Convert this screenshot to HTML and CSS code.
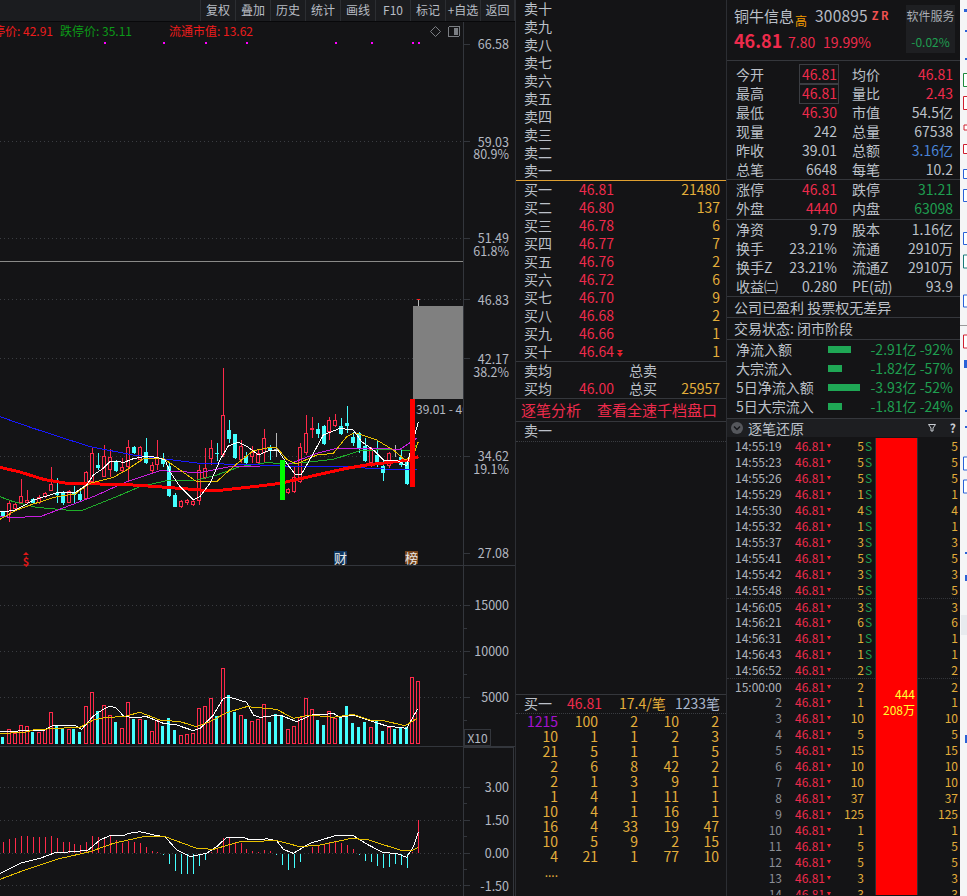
FILE: index.html
```html
<!DOCTYPE html>
<html lang="zh-CN">
<head>
<meta charset="utf-8">
<title>铜牛信息 300895</title>
<link rel="stylesheet" href="styles.css">
</head>
<body>
<div class="app">
  <section class="chart-col">
    <nav class="toolbar">
      <span class="tool">复权</span><span class="tool">叠加</span><span class="tool">历史</span><span class="tool">统计</span><span class="tool">画线</span><span class="tool">F10</span><span class="tool">标记</span><span class="tool">+自选</span><span class="tool">返回</span>
    </nav>
    <svg class="chart" id="chart" width="515" height="874" viewBox="0 22 515 874" xmlns="http://www.w3.org/2000/svg">
      <g class="grid">
        <line x1="0" x2="463" y1="141.5" y2="141.5"/><line x1="0" x2="463" y1="238.5" y2="238.5"/>
        <line x1="0" x2="463" y1="299.5" y2="299.5"/><line x1="0" x2="463" y1="358.5" y2="358.5"/>
        <line x1="0" x2="463" y1="456.5" y2="456.5"/><line x1="0" x2="463" y1="605.5" y2="605.5"/>
        <line x1="0" x2="463" y1="651.5" y2="651.5"/><line x1="0" x2="463" y1="697.5" y2="697.5"/>
        <line x1="0" x2="463" y1="787.5" y2="787.5"/><line x1="0" x2="463" y1="820.5" y2="820.5"/>
        <line x1="0" x2="463" y1="853.5" y2="853.5"/><line x1="0" x2="463" y1="885.5" y2="885.5"/>
      </g>
      <line class="fib" x1="0" x2="463" y1="261.5" y2="261.5"/>
      <g class="ticks">
        <path d="M464 44.5h6M464 141.5h6M464 238.5h6M464 299.5h6M464 358.5h6M464 456.5h6M464 553.5h6M464 605.5h6M464 628.5h3M464 651.5h6M464 674.5h3M464 697.5h6M464 720.5h3M464 787.5h6M464 803.5h3M464 820.5h6M464 836.5h3M464 853.5h6M464 869.5h3M464 885.5h6"/>
      </g>
      <g id="marks"></g>
      <rect class="shade" x="413" y="306" width="50" height="93"/>
      <text class="ma-note" x="416" y="408">39.01 - 46.81</text>
      <rect class="axis-cover" x="464" y="395" width="51" height="26"/>
      <rect class="axis-cover" x="464" y="22" width="51" height="14"/>
      <path class="frame" d="M463.5 22V896M0 565.5H515M0 746.5H515M513.5 747V896M464 747.5H513.5"/>
      <g class="axis">
        <text x="509" y="43">66.58</text><text x="509" y="141">59.03</text><text x="509" y="153.500">80.9%</text>
        <text x="509" y="237.500">51.49</text><text x="509" y="250">61.8%</text><text x="509" y="299">46.83</text>
        <text x="509" y="358.500">42.17</text><text x="509" y="371">38.2%</text><text x="509" y="455.500">34.62</text>
        <text x="509" y="468">19.1%</text><text x="509" y="552.500">27.08</text><text x="509" y="604.500">15000</text>
        <text x="509" y="650">10000</text><text x="509" y="696">5000</text><text x="509" y="786.500">3.00</text>
        <text x="509" y="819.500">1.50</text><text x="509" y="852.500">0.00</text><text x="509" y="885">-1.50</text>
      </g>
      <rect class="x10-box" x="464.500" y="729.500" width="26" height="16"/>
      <text class="x10" x="477.500" y="737.500">X10</text>
      <g class="top-info">
        <text class="red" x="-19" y="30">涨停价: 42.91</text>
        <text class="green" x="60" y="30">跌停价: 35.11</text>
        <text class="red" x="169" y="30">流通市值: 13.62</text>
      </g>
      <path class="diamond" d="M435.500 26.500l5 5-5 5-5-5z"/>
      <rect class="panel-ico" x="448.500" y="26.500" width="11" height="10" rx="1.500"/>
      <rect class="panel-fill" x="454" y="28" width="4" height="7"/>
      <path class="flag-up" d="M26 552l3 3h-6z"/>
      <text class="flag-s" x="26" y="561">$</text>
      <rect class="flag-cai" x="334" y="551" width="13" height="13"/>
      <text class="flag-txt" x="340.500" y="557.500">财</text>
      <rect class="flag-bang" x="405" y="551" width="13" height="13"/>
      <text class="flag-txt" x="411.500" y="557.500">榜</text>
    </svg>
  </section>

  <section class="book-col">
    <div class="ladder">
      <div class="lvl"><span>卖十</span></div><div class="lvl"><span>卖九</span></div><div class="lvl"><span>卖八</span></div><div class="lvl"><span>卖七</span></div><div class="lvl"><span>卖六</span></div><div class="lvl"><span>卖五</span></div><div class="lvl"><span>卖四</span></div><div class="lvl"><span>卖三</span></div><div class="lvl"><span>卖二</span></div><div class="lvl"><span>卖一</span></div>
    </div>
    <div class="ladder buy">
      <div class="lvl"><span>买一</span><span class="red">46.81</span><span class="yel">21480</span></div>
      <div class="lvl"><span>买二</span><span class="red">46.80</span><span class="yel">137</span></div>
      <div class="lvl"><span>买三</span><span class="red">46.78</span><span class="yel">6</span></div>
      <div class="lvl"><span>买四</span><span class="red">46.77</span><span class="yel">7</span></div>
      <div class="lvl"><span>买五</span><span class="red">46.76</span><span class="yel">2</span></div>
      <div class="lvl"><span>买六</span><span class="red">46.72</span><span class="yel">6</span></div>
      <div class="lvl"><span>买七</span><span class="red">46.70</span><span class="yel">9</span></div>
      <div class="lvl"><span>买八</span><span class="red">46.68</span><span class="yel">2</span></div>
      <div class="lvl"><span>买九</span><span class="red">46.66</span><span class="yel">1</span></div>
      <div class="lvl"><span>买十</span><span class="red">46.64<svg class="dbl" width="6" height="7" viewBox="0 0 6 7"><path d="M0 0h6L3 3zM0 3h6L3 7z"/></svg></span><span class="yel">1</span></div>
    </div>
    <div class="avg">
      <div class="avg-row"><span>卖均</span><span></span><span>总卖</span><span></span></div>
      <div class="avg-row"><span>买均</span><span class="red">46.00</span><span>总买</span><span class="yel">25957</span></div>
    </div>
    <div class="links"><span>逐笔分析</span><span>查看全速千档盘口</span></div>
    <div class="queue-head"><span>卖一</span></div>
    <div class="queue-empty"></div>
    <div class="queue-stat"><span>买一</span><span class="red">46.81</span><span class="yel">17.4/笔</span><span class="blu">1233笔</span></div>
    <div class="queue">
      <span class="pur">1215</span><span>100</span><span>2</span><span>10</span><span>2</span>
      <span>10</span><span>1</span><span>1</span><span>2</span><span>3</span>
      <span>21</span><span>5</span><span>1</span><span>1</span><span>5</span>
      <span>2</span><span>6</span><span>8</span><span>42</span><span>2</span>
      <span>2</span><span>1</span><span>3</span><span>9</span><span>1</span>
      <span>1</span><span>4</span><span>1</span><span>11</span><span>1</span>
      <span>10</span><span>4</span><span>1</span><span>16</span><span>1</span>
      <span>16</span><span>4</span><span>33</span><span>19</span><span>47</span>
      <span>10</span><span>5</span><span>9</span><span>2</span><span>15</span>
      <span>4</span><span>21</span><span>1</span><span>77</span><span>10</span>
      <span class="more">....</span>
    </div>
  </section>

  <section class="quote-col">
    <header class="stock">
      <div class="stock-main">
        <div class="name-row"><span class="name">铜牛信息</span><span class="gao">高</span><span class="code">300895</span><span class="zr">Z R</span></div>
        <div class="price-row"><span class="now">46.81</span><span class="chg">7.80</span><span class="pct">19.99%</span></div>
      </div>
      <div class="sector"><span>软件服务</span><span class="sector-chg">-0.02%</span></div>
    </header>
    <div class="kv-block">
      <div class="kv"><span>今开</span><span class="red boxed">46.81</span></div><div class="kv"><span>均价</span><span class="red">46.81</span></div>
      <div class="kv"><span>最高</span><span class="red boxed">46.81</span></div><div class="kv"><span>量比</span><span class="red">2.43</span></div>
      <div class="kv"><span>最低</span><span class="red">46.30</span></div><div class="kv"><span>市值</span><span>54.5亿</span></div>
      <div class="kv"><span>现量</span><span>242</span></div><div class="kv"><span>总量</span><span>67538</span></div>
      <div class="kv"><span>昨收</span><span>39.01</span></div><div class="kv"><span>总额</span><span class="blue">3.16亿</span></div>
      <div class="kv"><span>总笔</span><span>6648</span></div><div class="kv"><span>每笔</span><span>10.2</span></div>
    </div>
    <div class="kv-block tight">
      <div class="kv"><span>涨停</span><span class="red">46.81</span></div><div class="kv"><span>跌停</span><span class="grn">31.21</span></div>
      <div class="kv"><span>外盘</span><span class="red">4440</span></div><div class="kv"><span>内盘</span><span class="grn">63098</span></div>
    </div>
    <div class="kv-block tight">
      <div class="kv"><span>净资</span><span>9.79</span></div><div class="kv"><span>股本</span><span>1.16亿</span></div>
      <div class="kv"><span>换手</span><span>23.21%</span></div><div class="kv"><span>流通</span><span>2910万</span></div>
      <div class="kv"><span>换手Z</span><span>23.21%</span></div><div class="kv"><span>流通Z</span><span>2910万</span></div>
      <div class="kv"><span>收益㈡</span><span>0.280</span></div><div class="kv"><span>PE(动)</span><span>93.9</span></div>
    </div>
    <div class="note note-a">公司已盈利 投票权无差异</div>
    <div class="note note-b">交易状态: 闭市阶段</div>
    <div class="flow">
      <div class="flow-row"><span>净流入额</span><i class="fbar w23"></i><span class="grn">-2.91亿 -92%</span></div>
      <div class="flow-row"><span>大宗流入</span><i class="fbar w14"></i><span class="grn">-1.82亿 -57%</span></div>
      <div class="flow-row"><span>5日净流入额</span><i class="fbar w32"></i><span class="grn">-3.93亿 -52%</span></div>
      <div class="flow-row"><span>5日大宗流入</span><i class="fbar w14"></i><span class="grn">-1.81亿 -24%</span></div>
    </div>
    <div class="tape-head">
      <svg class="chev" width="12" height="12" viewBox="0 0 12 12"><circle cx="6" cy="6" r="6"/><path d="M3 4.500l3 3 3-3"/></svg>
      <span class="tape-title">逐笔还原</span>
      <svg class="filter" width="8" height="8" viewBox="0 0 8 8"><path d="M.5.500h7L5 4v3H3V4z"/></svg>
      <span class="help">?</span>
    </div>
    <div class="tape">
      <div class="tape-left">
        <div class="t"><span class="tm">14:55:19</span><span class="pr">46.81</span><span class="vl">5</span><span class="s">S</span></div>
        <div class="t"><span class="tm">14:55:23</span><span class="pr">46.81</span><span class="vl">5</span><span class="s">S</span></div>
        <div class="t"><span class="tm">14:55:26</span><span class="pr">46.81</span><span class="vl">5</span><span class="s">S</span></div>
        <div class="t"><span class="tm">14:55:29</span><span class="pr">46.81</span><span class="vl">1</span><span class="s">S</span></div>
        <div class="t"><span class="tm">14:55:30</span><span class="pr">46.81</span><span class="vl">4</span><span class="s">S</span></div>
        <div class="t"><span class="tm">14:55:32</span><span class="pr">46.81</span><span class="vl">1</span><span class="s">S</span></div>
        <div class="t"><span class="tm">14:55:37</span><span class="pr">46.81</span><span class="vl">3</span><span class="s">S</span></div>
        <div class="t"><span class="tm">14:55:41</span><span class="pr">46.81</span><span class="vl">5</span><span class="s">S</span></div>
        <div class="t"><span class="tm">14:55:42</span><span class="pr">46.81</span><span class="vl">3</span><span class="s">S</span></div>
        <div class="t"><span class="tm">14:55:48</span><span class="pr">46.81</span><span class="vl">5</span><span class="s">S</span></div>
        <div class="t sep"><span class="tm">14:56:05</span><span class="pr">46.81</span><span class="vl">3</span><span class="s">S</span></div>
        <div class="t"><span class="tm">14:56:21</span><span class="pr">46.81</span><span class="vl">6</span><span class="s">S</span></div>
        <div class="t"><span class="tm">14:56:31</span><span class="pr">46.81</span><span class="vl">1</span><span class="s">S</span></div>
        <div class="t"><span class="tm">14:56:43</span><span class="pr">46.81</span><span class="vl">1</span><span class="s">S</span></div>
        <div class="t"><span class="tm">14:56:52</span><span class="pr">46.81</span><span class="vl">2</span><span class="s">S</span></div>
        <div class="t sep"><span class="tm">15:00:00</span><span class="pr">46.81</span><span class="vl">2</span><span class="s"></span></div>
        <div class="t"><span class="tm seq">2</span><span class="pr">46.81</span><span class="vl">1</span><span class="s"></span></div>
        <div class="t"><span class="tm seq">3</span><span class="pr">46.81</span><span class="vl">10</span><span class="s"></span></div>
        <div class="t"><span class="tm seq">4</span><span class="pr">46.81</span><span class="vl">5</span><span class="s"></span></div>
        <div class="t"><span class="tm seq">5</span><span class="pr">46.81</span><span class="vl">15</span><span class="s"></span></div>
        <div class="t"><span class="tm seq">6</span><span class="pr">46.81</span><span class="vl">10</span><span class="s"></span></div>
        <div class="t"><span class="tm seq">7</span><span class="pr">46.81</span><span class="vl">10</span><span class="s"></span></div>
        <div class="t"><span class="tm seq">8</span><span class="pr">46.81</span><span class="vl">37</span><span class="s"></span></div>
        <div class="t"><span class="tm seq">9</span><span class="pr">46.81</span><span class="vl">125</span><span class="s"></span></div>
        <div class="t"><span class="tm seq">10</span><span class="pr">46.81</span><span class="vl">1</span><span class="s"></span></div>
        <div class="t"><span class="tm seq">11</span><span class="pr">46.81</span><span class="vl">5</span><span class="s"></span></div>
        <div class="t"><span class="tm seq">12</span><span class="pr">46.81</span><span class="vl">5</span><span class="s"></span></div>
        <div class="t"><span class="tm seq">13</span><span class="pr">46.81</span><span class="vl">3</span><span class="s"></span></div>
        <div class="t"><span class="tm seq">14</span><span class="pr">46.81</span><span class="vl">3</span><span class="s"></span></div>
      </div>
      <div class="tape-bar"><span>444</span><span>208万</span></div>
      <div class="tape-right">
        <div class="r">5</div><div class="r">5</div><div class="r">5</div><div class="r">1</div><div class="r">4</div><div class="r">1</div><div class="r">3</div><div class="r">5</div><div class="r">3</div><div class="r">5</div>
        <div class="r sep">3</div><div class="r">6</div><div class="r">1</div><div class="r">1</div><div class="r">2</div>
        <div class="r sep">2</div><div class="r">1</div><div class="r">10</div><div class="r">5</div><div class="r">15</div><div class="r">10</div><div class="r">10</div><div class="r">37</div><div class="r">125</div><div class="r">1</div><div class="r">5</div><div class="r">5</div><div class="r">3</div><div class="r">3</div>
      </div>
    </div>
  </section>

  <aside class="behind">
    <svg width="7" height="896" viewBox="960 0 7 896" xmlns="http://www.w3.org/2000/svg">
      <rect class="b-dark" x="960" y="0" width="7" height="70"/>
      <rect class="b-blue" x="964" y="9" width="3" height="3"/><rect class="b-blue" x="965" y="30" width="2" height="2"/><rect class="b-blue" x="965" y="58" width="2" height="2"/>
      <path class="b-line g" d="M967 73.500h-3.500v13h3.500"/><path class="b-line r" d="M967 96.500h-3.500v13h3.500"/>
      <path class="b-line r" d="M967 125h-3v5h3"/><path class="b-line r" d="M967 144.500h-3.500v9h3.500"/>
      <path class="b-line b" d="M967 169.500h-3.500v9h3.500"/><path class="b-line b" d="M967 189.500h-3.500v12h3.500"/>
      <path class="b-line b" d="M967 232.500h-3.500v12h3.500"/><path class="b-line t" d="M967 255h-3.500v13h3.500"/><path class="b-line b" d="M967 295h-3.500v12h3.500"/>
      <rect class="b-gray" x="960" y="325" width="7" height="1"/>
      <path class="b-line r" d="M967 335h-3.500v13h3.500"/><rect class="b-blue" x="964" y="360" width="3" height="8"/>
      <rect class="b-blue" x="965" y="410" width="2" height="2"/><rect class="b-blue" x="965" y="426" width="2" height="2"/>
      <path class="b-line b" d="M967 457h-3.500v13h3.500"/><path class="b-line b" d="M967 480h-3.500v13h3.500"/>
      <rect class="b-blue" x="965" y="552" width="2" height="2"/><rect class="b-blue" x="965" y="575" width="2" height="6"/>
      <rect class="b-soft" x="961" y="615" width="6" height="20"/>
      <rect class="b-blue" x="965" y="735" width="2" height="8"/>
    </svg>
  </aside>
</div>
<script src="chart.js"></script>
</body>
</html>
```

FILE: styles.css
```css
* { box-sizing: border-box; }
html, body { margin: 0; padding: 0; background: #141416; }
body {
  width: 967px;
  height: 896px;
  overflow: hidden;
  font: 14px/18px "Noto Sans CJK SC", "Noto Sans", sans-serif;
  color: #bcc1c9;
}
.app { display: flex; width: 967px; height: 896px; }

/* Colours */
.red { color: #ee2b4c; }
.yel { color: #e3ae3b; }
.grn { color: #1f9e50; }
.blue { color: #4a84d8; }
.blu { color: #a9b6cc; }
.pur { color: #a412d0; }

/* Chart column */
.chart-col { width: 515px; flex: none; }
.toolbar {
  height: 22px;
  display: flex;
  justify-content: flex-end;
  background: #1b1c1f;
  border-bottom: 1px solid #08080a;
  font-size: 12px;
  line-height: 20px;
}
.tool { width: 35px; text-align: center; border-left: 1px solid #2c2e32; color: #b8bcc4; white-space: nowrap; }
.tool:last-child { border-right: 1px solid #2c2e32; }
.chart { display: block; shape-rendering: crispEdges; }
.chart text { font-family: "Noto Sans CJK SC", "Noto Sans", sans-serif; dominant-baseline: central; }
.grid line { stroke: #3a3c41; stroke-width: 1; stroke-dasharray: 1 3; }
.fib { stroke: #8a8a88; stroke-width: 1; }
.ticks path, .frame { stroke: #33363c; stroke-width: 1; fill: none; }
.axis text { fill: #b4b9c2; font-size: 12.5px; text-anchor: end; }
.axis-cover { fill: #141416; }
.shade { fill: #808080; }
.ma-note { fill: #b4b9c2; font-size: 12px; }
.x10-box { fill: #141416; stroke: #33363c; }
.x10 { fill: #b4b9c2; font-size: 12px; text-anchor: middle; }
.top-info text { font-size: 12px; }
.top-info .red { fill: #ee1c1c; }
.top-info .green { fill: #0c9a18; }
.diamond { fill: none; stroke: #7b7e83; shape-rendering: geometricPrecision; }
.panel-ico { fill: none; stroke: #7b7e83; }
.panel-fill { fill: #7b7e83; }
.flag-up { fill: #e01818; shape-rendering: geometricPrecision; }
.flag-s { fill: #e01818; font-size: 11px; font-weight: 700; text-anchor: middle; }
.flag-cai { fill: #0d355f; }
.flag-bang { fill: #75431a; }
.flag-txt { fill: #e8e8e8; font-size: 13px; text-anchor: middle; }

/* Order book column */
.book-col {
  width: 212px;
  flex: none;
  display: flex;
  flex-direction: column;
  border-left: 1px solid #2c2e33;
  border-right: 1px solid #2c2e33;
}
.ladder { flex: none; }
.ladder.buy { border-top: 1px solid #e0a030; border-bottom: 1px solid #35373c; }
.lvl { height: 18px; line-height: 16px; display: grid; grid-template-columns: 55px 1fr auto; padding: 0 6px 0 8px; }
.dbl { margin-left: 3px; fill: #e8202a; }
.avg { border-bottom: 1px solid #35373c; }
.avg-row { height: 18px; line-height: 16px; display: grid; grid-template-columns: 55px 50px 1fr auto; padding: 0 6px 0 8px; }
.links {
  height: 23px;
  display: flex;
  gap: 16px;
  padding: 0 0 0 5px;
  color: #ee2b4c;
  font-size: 15px;
  line-height: 21px;
  border-bottom: 1px solid #35373c;
}
.queue-head { height: 20px; line-height: 17px; padding: 0 0 0 8px; border-bottom: 1px dotted #3a3c41; }
.queue-empty { height: 253px; flex: none; border-bottom: 1px solid #35373c; }
.queue-stat {
  height: 19px;
  line-height: 16px;
  display: grid;
  grid-template-columns: 43px 52px 54px 1fr;
  padding: 0 6px 0 8px;
  border-bottom: 1px dotted #3a3c41;
  white-space: nowrap;
}
.queue-stat .blu { text-align: right; }
.queue {
  display: grid;
  grid-template-columns: 42px 40px 40px 41px 40px;
  grid-auto-rows: 15px;
  color: #e3ae3b;
  line-height: 15px;
  text-align: right;
}
.more { font-size: 12px; }

/* Quote column */
.quote-col { width: 233px; flex: none; display: flex; flex-direction: column; }
.stock { height: 61px; flex: none; display: flex; justify-content: space-between; padding: 5px 5px 0 7px; border-bottom: 1px solid #35373c; }
.stock-main { display: flex; flex-direction: column; gap: 3px; }
.name-row { display: flex; align-items: baseline; height: 20px; line-height: 20px; white-space: nowrap; }
.name { font-size: 15px; }
.gao { font-size: 12px; color: #f59a00; margin: 0 8px 0 1px; position: relative; top: 4px; }
.code { font-size: 15.500px; letter-spacing: .2px; color: #b4bac3; }
.zr { font-size: 11px; font-weight: 700; color: #f05050; margin-left: 4px; position: relative; top: -2px; }
.price-row { display: flex; align-items: baseline; height: 24px; line-height: 24px; white-space: nowrap; color: #ee2b4c; }
.now { font-size: 18px; font-weight: 700; width: 54px; }
.chg { width: 35px; }
.sector {
  width: 49px;
  height: 48px;
  background: #1e1f22;
  display: flex;
  flex-direction: column;
  align-items: center;
  gap: 8px;
  font-size: 12px;
  line-height: 18px;
  padding-top: 2px;
  color: #a9adb4;
  white-space: nowrap;
}
.sector-chg { color: #1f9e50; }
.kv-block {
  padding: 4px 7px 0 9px;
  display: grid;
  grid-template-columns: 101px 101px;
  column-gap: 15px;
  grid-auto-rows: 19px;
  flex: none;
  border-bottom: 1px solid #35373c;
}
.kv-block.tight { padding-top: 0; height: 40px; }
.kv-block.tight + .kv-block.tight { height: 77px; }
.kv { display: flex; justify-content: space-between; line-height: 19px; white-space: nowrap; color: #bcc1c9; }
.kv .red { color: #ee2b4c; }
.kv .grn { color: #1f9e50; }
.kv .blue { color: #4a84d8; }
.boxed { outline: 1px solid #3b3d42; outline-offset: 0; padding: 0 1px 0 2px; margin-right: -1px; }
.note { padding-left: 7px; flex: none; border-bottom: 1px solid #35373c; line-height: 21px; }
.note-a { height: 21px; }
.note-b { height: 22px; }
.flow { padding: 0 7px 0 9px; height: 79px; flex: none; border-bottom: 1px solid #35373c; }
.flow-row { height: 19px; line-height: 19px; display: grid; grid-template-columns: 92px 1fr auto; align-items: center; }
.fbar { display: block; height: 7px; background: #1fa755; }
.w23 { width: 23px; }
.w14 { width: 14px; }
.w32 { width: 32px; }
.tape-head { height: 19px; flex: none; display: flex; align-items: center; padding: 0 4px; background: #1d1e21; border-bottom: 1px solid #141416; }
.chev circle { fill: #55575c; }
.chev path { fill: none; stroke: #16171a; stroke-width: 1.500; }
.tape-title { margin-left: 5px; font-size: 14px; flex: 1; }
.filter path { fill: none; stroke: #c8ccd2; }
.help { width: 12px; margin-left: 8px; font-size: 12px; font-weight: 700; text-align: right; color: #c8ccd2; }
.tape { display: flex; flex: none; height: 457px; overflow: hidden; font-size: 12px; }
.tape-left { width: 148px; flex: none; }
.t, .r { height: 16px; line-height: 16px; }
.t { display: grid; grid-template-columns: 68px 38px 31px 11px; }
.tm { padding-left: 8px; color: #aeb3bb; white-space: nowrap; }
.tm.seq { text-align: right; padding: 0 13px 0 0; color: #8b8f96; }
.pr { color: #ee2b4c; position: relative; }
.pr::after {
  content: "";
  position: absolute;
  left: 32px;
  top: 6px;
  border-top: 4px solid #ee2030;
  border-left: 2.500px solid transparent;
  border-right: 2.500px solid transparent;
}
.vl { color: #e3ae3b; text-align: right; }
.s { color: #1f9e50; padding-left: 1px; }
.sep { border-top: 1px dotted #33353a; line-height: 15px; }
.tape-bar {
  width: 43px;
  flex: none;
  background: #ff0000;
  border-left: 1px solid #2d2f33;
  border-right: 1px solid #2d2f33;
  display: flex;
  flex-direction: column;
  align-items: flex-end;
  padding: 248px 2px 0 0;
  color: #ffff30;
  line-height: 16px;
  font-size: 12px;
}
.tape-right { width: 42px; flex: none; padding-right: 2px; text-align: right; color: #e3ae3b; }

/* Sliver of the window behind */
.behind { flex: 1; background: #f5f5f6; overflow: hidden; }
.behind svg { display: block; }
.b-dark { fill: #f5f5f6; }
.b-blue { fill: #2a62d8; }
.b-gray { fill: #9a9a9a; }
.b-soft { fill: #e8eaee; }
.b-line { fill: #fff; stroke-width: 1; }
.b-line.g { stroke: #1f8a3c; }
.b-line.r { stroke: #d02030; }
.b-line.b { stroke: #2a62d8; }
.b-line.t { stroke: #1a7a7a; }
```

FILE: chart.js
```js
// Daily candles, volume and MACD, sampled from the chart in a 3x grid.
var NS = 'http://www.w3.org/2000/svg';
var root = document.getElementById('marks');
var RED = '#ff2a4a', CYAN = '#44ffff', GRAY = '#b8b8b8';

function X(i) { return 3.3 + 5.93 * i; }
function el(name, attrs) {
  var n = document.createElementNS(NS, name);
  for (var k in attrs) n.setAttribute(k, attrs[k]);
  root.appendChild(n);
  return n;
}
function rect(x, y, w, h, fill) { el('rect', { x: x, y: y, width: w, height: h, fill: fill }); }
function hollow(x, y, w, h, col) {
  el('rect', { x: x + 0.5, y: y + 0.5, width: w - 1, height: Math.max(h - 1, 1), fill: '#141416', stroke: col });
}
function poly(points, ox, oy, col, width) {
  var d = points.map(function (p) { return (p[0] / 3 + ox) + ',' + (p[1] / 3 + oy); }).join(' ');
  el('polyline', { points: d, fill: 'none', stroke: col, 'stroke-width': width || 1, 'stroke-linejoin': 'round' });
}

// [colour, body top, body bottom, wick top, wick bottom]; y in 3x units from y=360
var candles = [
  ['c',455,472,452,475],['r',430,465,420,485],['r',432,446,425,450],['r',408,430,358,432],['r',420,430,390,432],
  ['c',418,428,415,432],['r',412,430,405,432],['r',400,412,395,415],['r',372,392,320,394],['c',398,404,355,430],
  ['c',400,430,392,435],['r',392,428,390,430],['c',398,404,378,430],['c',402,420,385,422],['r',336,418,332,420],
  ['r',280,365,260,370],['c',315,325,280,330],['r',288,350,255,352],['r',290,330,268,350],['c',305,332,300,335],
  ['r',320,332,295,335],['r',262,320,240,362],['c',260,278,258,282],['r',262,300,258,305],['c',276,310,235,312],
  ['r',316,332,305,340],['r',292,316,240,330],['c',298,312,280,320],['c',318,408,310,410],['c',405,440,400,442],
  ['r',423,442,420,444],['r',420,430,416,436],['r',424,436,420,438],['r',330,422,315,435],['r',325,355,265,358],
  ['r',265,296,240,315],['c',278,282,250,302],['r',166,285,25,290],['c',210,236,180,248],['c',222,294,222,296],
  ['r',258,300,240,310],['c',288,310,276,322],['r',275,290,258,310],['r',278,310,270,312],['r',235,280,208,310],
  ['c',263,270,255,300],['w',268,270,220,290],null,['r',388,400,385,402],['r',352,396,320,398],
  ['r',262,365,250,368],['r',220,280,165,285],['r',204,210,172,235],['c',208,222,188,235],['c',198,252,195,255],
  ['r',180,215,170,240],['r',180,198,162,200],['c',198,222,175,225],['c',188,198,138,218],['c',230,250,215,258],
  ['c',218,265,215,278],['c',258,304,235,306],['r',268,310,262,322],['c',285,310,240,320],['c',318,340,300,362],
  ['r',278,318,275,325],['w',268,270,255,292],['c',292,316,265,320],['c',305,372,300,376]
];
candles.forEach(function (c, i) {
  if (!c) return;
  var x = Math.round(X(i)) - 1, col = c[0] === 'r' ? RED : c[0] === 'c' ? CYAN : GRAY;
  var bt = 360 + Math.round(c[1] / 3), bb = 360 + Math.round(c[2] / 3);
  var wt = 360 + Math.round(c[3] / 3), wb = 360 + Math.round(c[4] / 3);
  rect(x + 1, wt, 1, wb - wt, col);
  if (c[0] === 'r') hollow(x - 1, bt, 4, bb - bt, col);
  else rect(x - 1, bt, 4, Math.max(bb - bt, 1), col);
});

// Moving averages on the price pane
var ma = [
  ['#1fae2a', 1, [[0,410],[40,425],[110,442],[220,452],[250,450],[300,430],[350,410],[420,380],[500,362],[590,360],[650,345],[720,320],[800,308],[870,312],[1000,298],[1080,272],[1180,268],[1230,272],[1250,255]]],
  ['#c81ee0', 1, [[0,468],[30,472],[120,470],[200,440],[280,410],[380,365],[480,332],[600,338],[700,318],[780,318],[860,315],[950,280],[1010,265],[1120,265],[1200,268],[1250,235]]],
  ['#1818ff', 1, [[0,170],[100,205],[270,260],[400,285],[600,310],[780,315],[850,318],[1040,320],[1120,326],[1250,330]]],
  ['#ff0000', 3, [[0,322],[60,336],[130,358],[200,370],[300,372],[400,375],[500,382],[600,390],[650,392],[760,380],[840,370],[950,345],[1040,325],[1100,315],[1230,300],[1255,290]]],
  ['#e8c000', 1, [[0,478],[50,450],[100,432],[170,410],[225,402],[270,370],[340,352],[380,330],[430,296],[490,295],[540,330],[590,365],[650,365],[700,320],[760,272],[810,262],[830,262],[860,298],[890,312],[950,285],[1000,280],[1040,230],[1065,218],[1130,240],[1180,270],[1215,300],[1238,290],[1255,245]]],
  ['#ffffff', 1, [[0,455],[40,452],[80,432],[100,420],[150,405],[170,398],[225,398],[260,375],[280,345],[310,325],[330,305],[350,303],[370,308],[400,296],[440,288],[470,292],[495,300],[510,335],[540,380],[580,420],[600,410],[630,370],[660,300],[685,258],[715,246],[745,262],[775,285],[810,270],[835,272],[860,310],[885,342],[905,342],[940,280],[970,225],[1020,205],[1060,210],[1085,245],[1120,270],[1150,300],[1190,300],[1220,318],[1235,260],[1255,185]]]
];
ma.forEach(function (m) { poly(m[2], 0, 360, m[0], m[1]); });

// Gap-down and limit-up days, drawn thick above the averages
rect(280, 460, 5, 40, '#00ff00');
rect(410, 399, 5, 88, '#ff0000');
rect(418, 300, 1, 6, GRAY);
rect(417, 299, 3, 1, '#ff2020');

// Magenta event dots along the top
[104, 163, 205, 246, 335, 371, 412, 418].forEach(function (x) { rect(x, 42, 2, 2, '#ff00ff'); });

// Volume: colour + top y (3x units from y=570)
var vols = 'c500 r478 r490 r465 r468 c485 r485 r478 r427 c465 c477 r477 c477 c485 r408 r367 c423 r405 r435 c456 r475 r397 c447 r447 c450 r484 r450 c468 c444 c480 r496 r492 r490 r415 r408 r384 c438 r295 c375 c426 r435 c447 r453 r447 r402 c456 c432 c435 r477 r468 r441 r384 r417 c450 c465 r423 r444 c444 c408 c459 c471 c456 r471 c453 c483 r471 c477 c471 c472 r322 r333'.split(' ');
vols.forEach(function (v, i) {
  var top = 570 + Math.round(+v.slice(1) / 3), x = Math.round(X(i)) - 2, h = 744 - top;
  if (v[0] === 'r') hollow(x, top, 4, h, RED);
  else rect(x, top, 3, h, CYAN);
});
poly([[0,484],[20,486],[90,480],[130,482],[155,468],[225,466],[245,478],[280,438],[310,418],[330,408],[350,415],[370,438],[400,443],[440,440],[490,460],[530,465],[580,482],[600,475],[640,435],[670,385],[690,382],[740,397],[760,435],[780,442],[840,435],[890,455],[935,435],[975,433],[1000,430],[1020,442],[1060,435],[1110,452],[1160,468],[1220,475],[1252,418]], 0, 570, '#ffffff');
poly([[0,490],[70,488],[100,480],[170,475],[240,472],[280,450],[320,442],[370,440],[420,427],[480,450],[540,455],[590,470],[630,455],[680,428],[740,410],[830,418],[880,445],[930,435],[1000,442],[1060,433],[1110,450],[1150,452],[1215,467],[1252,445]], 0, 570, '#e8c000');

// MACD histogram: end y in 3x units from y=570, baseline 850
var macd = [816,808,805,798,798,800,800,800,798,804,816,816,822,825,816,798,800,800,796,810,818,812,816,820,830,843,846,852,878,900,908,910,908,884,866,846,835,803,804,816,820,836,843,846,840,843,851,882,896,892,872,850,832,826,826,816,814,820,825,838,851,870,872,885,892,888,880,882,892,845,750];
macd.forEach(function (v, i) {
  if (v === 850) return;
  var y = 570 + Math.round(v / 3), x = Math.round(X(i));
  if (v < 850) rect(x, y, 1, 853 - y, RED);
  else rect(x, 854, 1, y - 853, CYAN);
});
poly([[0,910],[60,880],[120,865],[165,848],[225,845],[265,840],[300,810],[330,797],[370,798],[385,790],[420,785],[470,797],[495,800],[530,840],[570,860],[620,850],[650,830],[680,802],[730,802],[745,808],[780,810],[800,806],[830,812],[850,838],[880,850],[930,820],[970,808],[1005,797],[1060,797],[1100,822],[1150,848],[1190,850],[1220,862],[1240,830],[1255,785]], 0, 570, '#ffffff');
poly([[0,928],[80,898],[170,868],[270,845],[340,820],[430,800],[495,800],[590,835],[640,838],[720,815],[830,812],[900,830],[960,825],[1050,806],[1100,808],[1200,840],[1240,840],[1255,832]], 0, 570, '#e8c000');
```
